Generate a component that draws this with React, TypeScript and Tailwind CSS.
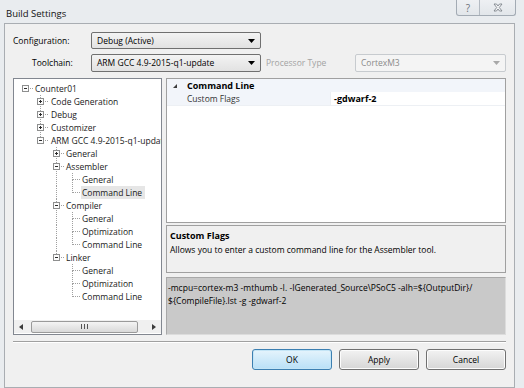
import clsx from "clsx";

type TreeNode = {
  label: string;
  level: number;
  box?: "plus" | "minus";
  selected?: boolean;
};

const nodes: TreeNode[] = [
  { label: "Counter01", level: 0, box: "minus" },
  { label: "Code Generation", level: 1, box: "plus" },
  { label: "Debug", level: 1, box: "plus" },
  { label: "Customizer", level: 1, box: "plus" },
  { label: "ARM GCC 4.9-2015-q1-update", level: 1, box: "minus" },
  { label: "General", level: 2, box: "plus" },
  { label: "Assembler", level: 2, box: "minus" },
  { label: "General", level: 3 },
  { label: "Command Line", level: 3, selected: true },
  { label: "Compiler", level: 2, box: "minus" },
  { label: "General", level: 3 },
  { label: "Optimization", level: 3 },
  { label: "Command Line", level: 3 },
  { label: "Linker", level: 2, box: "minus" },
  { label: "General", level: 3 },
  { label: "Optimization", level: 3 },
  { label: "Command Line", level: 3 },
];

// x of the expander column per level, and where the label starts
const COLS = [11.5, 26.5, 42.5, 58.5];
const TEXT_X = [20, 36, 51, 67];

// does a later sibling at `level` follow row i before the branch closes?
function continues(i: number, level: number) {
  for (let j = i + 1; j < nodes.length; j++) {
    if (nodes[j].level < level) return false;
    if (nodes[j].level === level) return true;
  }
  return false;
}

function TreeLines({ index }: { index: number }) {
  const { level, box } = nodes[index];
  const x = COLS[level];
  const w = TEXT_X[level];
  const lines = [];
  for (let k = 1; k < level; k++) {
    if (continues(index, k)) {
      lines.push(<line key={k} x1={COLS[k]} y1={0} x2={COLS[k]} y2={13} />);
    }
  }
  if (level > 0) lines.push(<line key="up" x1={x} y1={0} x2={x} y2={6.5} />);
  if (level > 0 && continues(index, level)) {
    lines.push(<line key="down" x1={x} y1={6.5} x2={x} y2={13} />);
  }
  lines.push(<line key="h" x1={x} y1={6.5} x2={w - 1} y2={6.5} />);

  return (
    <svg width={w} height={13} className="shrink-0" shapeRendering="crispEdges">
      <g stroke="#a0a0a0" strokeDasharray="1 1">{lines}</g>
      {box && (
        <g>
          <rect x={x - 3} y={3.5} width={6} height={6} fill="#fcfcfc" stroke="#8e8f8f" />
          <line x1={x - 1.5} y1={6.5} x2={x + 1.5} y2={6.5} stroke="#2b2b2b" />
          {box === "plus" && <line x1={x} y1={5} x2={x} y2={8} stroke="#2b2b2b" />}
        </g>
      )}
    </svg>
  );
}

function Arrow({ color }: { color: string }) {
  return (
    <svg width="7" height="4" viewBox="0 0 7 4" className="shrink-0">
      <path d="M0 0h7L3.5 4z" fill={color} />
    </svg>
  );
}

function Combo({
  text,
  className,
  disabled,
}: {
  text: string;
  className: string;
  disabled?: boolean;
}) {
  return (
    <div
      className={clsx(
        "flex items-center justify-between gap-[4px] rounded-[2px] border pl-[5px] pr-[5px]",
        disabled
          ? "border-[#c7cbcf] bg-[#f4f4f4] text-[#8a8a8a]"
          : "border-[#707070] bg-gradient-to-b from-[#f3f3f3] to-[#e2e2e2] text-black",
        className
      )}
    >
      <span className="whitespace-nowrap leading-[12px]">{text}</span>
      <Arrow color={disabled ? "#a8a8a8" : "#000"} />
    </div>
  );
}

function Button({ label, primary }: { label: string; primary?: boolean }) {
  return (
    <div
      className={clsx(
        "flex h-[21px] w-[80px] items-center justify-center rounded-[3px] border",
        primary
          ? "border-[#3c7fb1] bg-gradient-to-b from-[#e5f4fc] to-[#b9e0f7] shadow-[inset_0_0_0_1px_#c4e5f6]"
          : "border-[#707070] bg-gradient-to-b from-[#f2f2f2] to-[#d6d6d6] shadow-[inset_0_0_0_1px_#fcfcfc]"
      )}
    >
      {label}
    </div>
  );
}

function HScrollBar() {
  return (
    <div className="flex h-[13px] items-center bg-[#f0f0f0] px-[5px]">
      <svg width="4" height="6" viewBox="0 0 4 6" className="shrink-0">
        <path d="M4 0v6L0 3z" fill="#3b3b3b" />
      </svg>
      <div className="ml-[8px] flex h-[12px] w-[107px] items-center justify-center rounded-[2px] border border-[#9a9a9a] bg-gradient-to-b from-[#f4f4f4] to-[#d9d9d9]">
        <svg width="7" height="5" viewBox="0 0 7 5">
          <path d="M0.5 0v5M3.5 0v5M6.5 0v5" stroke="#555" />
        </svg>
      </div>
      <div className="flex-1" />
      <svg width="4" height="6" viewBox="0 0 4 6" className="shrink-0">
        <path d="M0 0v6l4-3z" fill="#3b3b3b" />
      </svg>
    </div>
  );
}

export default function App() {
  return (
    <div className="flex h-[388px] w-[524px] flex-col overflow-hidden bg-[#e9ecef] font-['Open_Sans','Liberation_Sans',sans-serif] text-[8.5px] leading-[12px] text-black">
      {/* title bar */}
      <div className="flex h-[23px] shrink-0 items-start justify-between pl-[6px] pr-[8px]">
        <span className="mt-[7px] text-[9.5px] leading-[13px] text-[#111]">Build Settings</span>
        <div className="flex h-[16px] rounded-b-[3px] border border-t-0 border-[#a3abb4] bg-gradient-to-b from-[#eef0f3] to-[#e2e6ea]">
          <div className="flex w-[23px] items-center justify-center border-r border-[#b3bac2] text-[10px] text-[#6b7179]">
            ?
          </div>
          <div className="flex w-[35px] items-center justify-center">
            <svg width="10" height="9" viewBox="0 0 10 9">
              <path
                d="M1 1h2.5L5 3l1.5-2H9L6.3 4.5 9 8H6.5L5 6 3.5 8H1l2.7-3.5z"
                fill="#f4f5f6"
                stroke="#727981"
                strokeWidth="0.8"
              />
            </svg>
          </div>
        </div>
      </div>

      {/* client area */}
      <div className="ml-[4px] mr-[9px] flex flex-1 flex-col border border-[#a9adb2] bg-[#f0f0f0] px-[8px] pt-[8px]">
        <div className="flex h-[17px] items-center">
          <span className="w-[78px]">Configuration:</span>
          <Combo text="Debug (Active)" className="h-[17px] w-[170px]" />
        </div>
        <div className="mt-[5px] flex h-[18px] items-center">
          <span className="w-[78px] pl-[19px]">Toolchain:</span>
          <Combo text="ARM GCC 4.9-2015-q1-update" className="h-[18px] w-[170px]" />
          <span className="ml-[5px] w-[89px] text-[#a3a3a3]">Processor Type</span>
          <Combo text="CortexM3" className="h-[18px] w-[151px]" disabled />
        </div>

        <div className="mt-[6px] flex h-[257px] gap-[4px]">
          {/* tree */}
          <div className="flex w-[149px] flex-col overflow-hidden border border-[#828790] bg-white">
            <div className="flex-1 overflow-hidden pt-[3px]">
              {nodes.map((n, i) => (
                <div key={i} className="flex h-[13px] items-center whitespace-nowrap text-[#1a1a1a]">
                  <TreeLines index={i} />
                  <span
                    className={clsx(
                      "flex h-[13px] items-center px-[1px]",
                      n.selected && "bg-[#e6e6e6] pr-[3px]"
                    )}
                  >
                    {n.label}
                  </span>
                </div>
              ))}
            </div>
            <HScrollBar />
            <div className="h-[1px]" />
          </div>

          {/* properties */}
          <div className="flex w-[340px] flex-col">
            <div className="h-[145px] border border-[#a0a0a0] bg-white">
              <div className="flex h-[13px] items-center bg-[#f2f5fa]">
                <svg width="20" height="13" viewBox="0 0 20 13" className="shrink-0">
                  <path d="M10 5v4H6z" fill="#3d3d3d" />
                </svg>
                <span className="text-[9px] font-bold">Command Line</span>
              </div>
              <div className="flex h-[14px] items-center border-b border-[#edf0f4]">
                <div className="flex h-full w-[163px] items-center bg-[#f2f5fa] pl-[20px] text-[#333]">
                  Custom Flags
                </div>
                <div className="flex h-full flex-1 items-center border-l border-[#edf0f4] pl-[3px] text-[9px] font-bold">
                  -gdwarf-2
                </div>
              </div>
            </div>
            <div className="mt-[2px] flex h-[48px] flex-col border border-[#a0a0a0] bg-[#f0f0f0] px-[3px] pt-[4px]">
              <span className="text-[9px] font-bold">Custom Flags</span>
              <span className="mt-[2px]">Allows you to enter a custom command line for the Assembler tool.</span>
            </div>
            <div className="mt-[4px] flex-1 border border-[#dcdcdc] border-l-[#a8a8a8] border-t-[#a8a8a8] bg-[#c9c9c9] px-[1px] pt-[3px] leading-[13px]">
              -mcpu=cortex-m3 -mthumb -I. -IGenerated_Source\PSoC5 -alh=${"{"}OutputDir{"}"}/
              <br />
              ${"{"}CompileFile{"}"}.lst -g -gdwarf-2
            </div>
          </div>
        </div>

        <div className="mt-[6px] h-[2px] border-t border-[#a0a0a0] border-b border-b-white" />

        <div className="mt-[6px] flex justify-end gap-[7px]">
          <Button label="OK" primary />
          <Button label="Apply" />
          <Button label="Cancel" />
        </div>
      </div>
    </div>
  );
}
